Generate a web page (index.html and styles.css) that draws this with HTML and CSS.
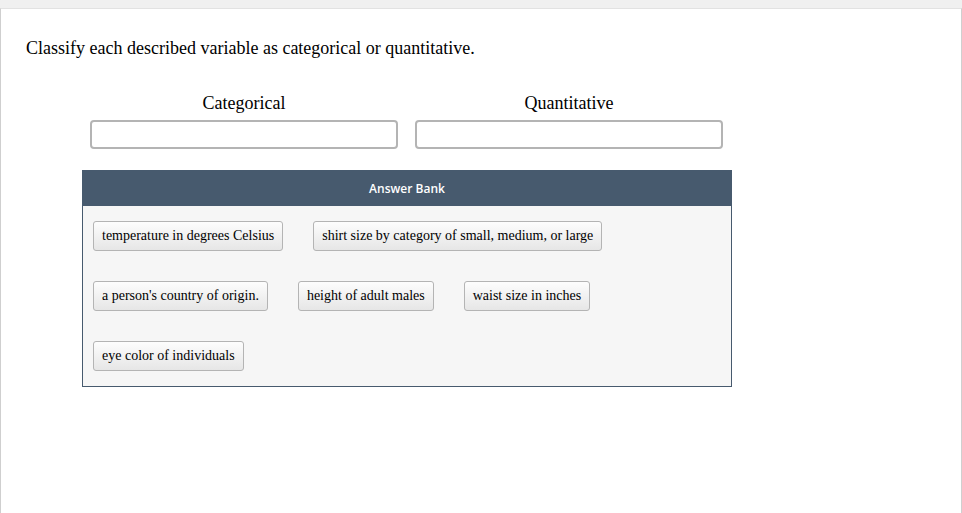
FILE: index.html
```html
<!DOCTYPE html>
<html lang="en">
<head>
    <meta charset="UTF-8">
    <title>Classify variables</title>
    <link rel="stylesheet" href="styles.css">
</head>
<body>
    <div class="card">
        <p class="question">Classify each described variable as categorical or quantitative.</p>

        <div class="targets">
            <div class="target">
                <div class="targetLabel">Categorical</div>
                <div class="dropBox"></div>
            </div>
            <div class="target">
                <div class="targetLabel">Quantitative</div>
                <div class="dropBox"></div>
            </div>
        </div>

        <div class="bank">
            <div class="bankHead">Answer Bank</div>
            <div class="bankBody">
                <div class="chipRow">
                    <span class="chip">temperature in degrees Celsius</span>
                    <span class="chip">shirt size by category of small, medium, or large</span>
                </div>
                <div class="chipRow">
                    <span class="chip">a person's country of origin.</span>
                    <span class="chip">height of adult males</span>
                    <span class="chip">waist size in inches</span>
                </div>
                <div class="chipRow">
                    <span class="chip">eye color of individuals</span>
                </div>
            </div>
        </div>
    </div>
</body>
</html>
```

FILE: styles.css
```css
body {
    margin: 0;
    background-color: #f0f0f0;
    font-family: "Liberation Serif", "Times New Roman", serif;
    color: #000;
}

.card {
    margin-top: 8px;
    height: 505px;
    background-color: #fff;
    border-top: 1px solid #e2e2e2;
    border-left: 1px solid #cfcfcf;
    border-right: 1px solid #cfcfcf;
    box-sizing: border-box;
    padding: 0 0 0 25px;
}

.question {
    margin: 0;
    padding-top: 29px;
    font-size: 18px;
    line-height: 20px;
}

.targets {
    display: flex;
    gap: 17px;
    margin: 35px 0 0 64px;
}

.target {
    width: 308px;
    text-align: center;
}

.targetLabel {
    font-size: 18px;
    line-height: 20px;
    margin-bottom: 7px;
}

.dropBox {
    height: 25px;
    border: 2px solid #b4b4b4;
    border-radius: 4px;
}

.bank {
    width: 650px;
    margin: 21px 0 0 56px;
    border: 1px solid #475a6e;
    box-sizing: border-box;
}

.bankHead {
    height: 35px;
    line-height: 35px;
    background-color: #475a6e;
    color: #fff;
    text-align: center;
    font-family: "Open Sans", "Noto Sans", sans-serif;
    font-size: 12px;
    font-weight: 600;
}

.bankBody {
    background-color: #f6f6f6;
    padding: 15px 10px 15px;
    display: flex;
    flex-direction: column;
    gap: 30px;
}

.chipRow {
    display: flex;
    gap: 30px;
}

.chip {
    height: 28px;
    line-height: 28px;
    padding: 0 8px;
    font-size: 14px;
    border: 1px solid #b4b4b4;
    border-radius: 3px;
    background: linear-gradient(#fdfdfd, #e6e6e6);
    white-space: nowrap;
}
```
